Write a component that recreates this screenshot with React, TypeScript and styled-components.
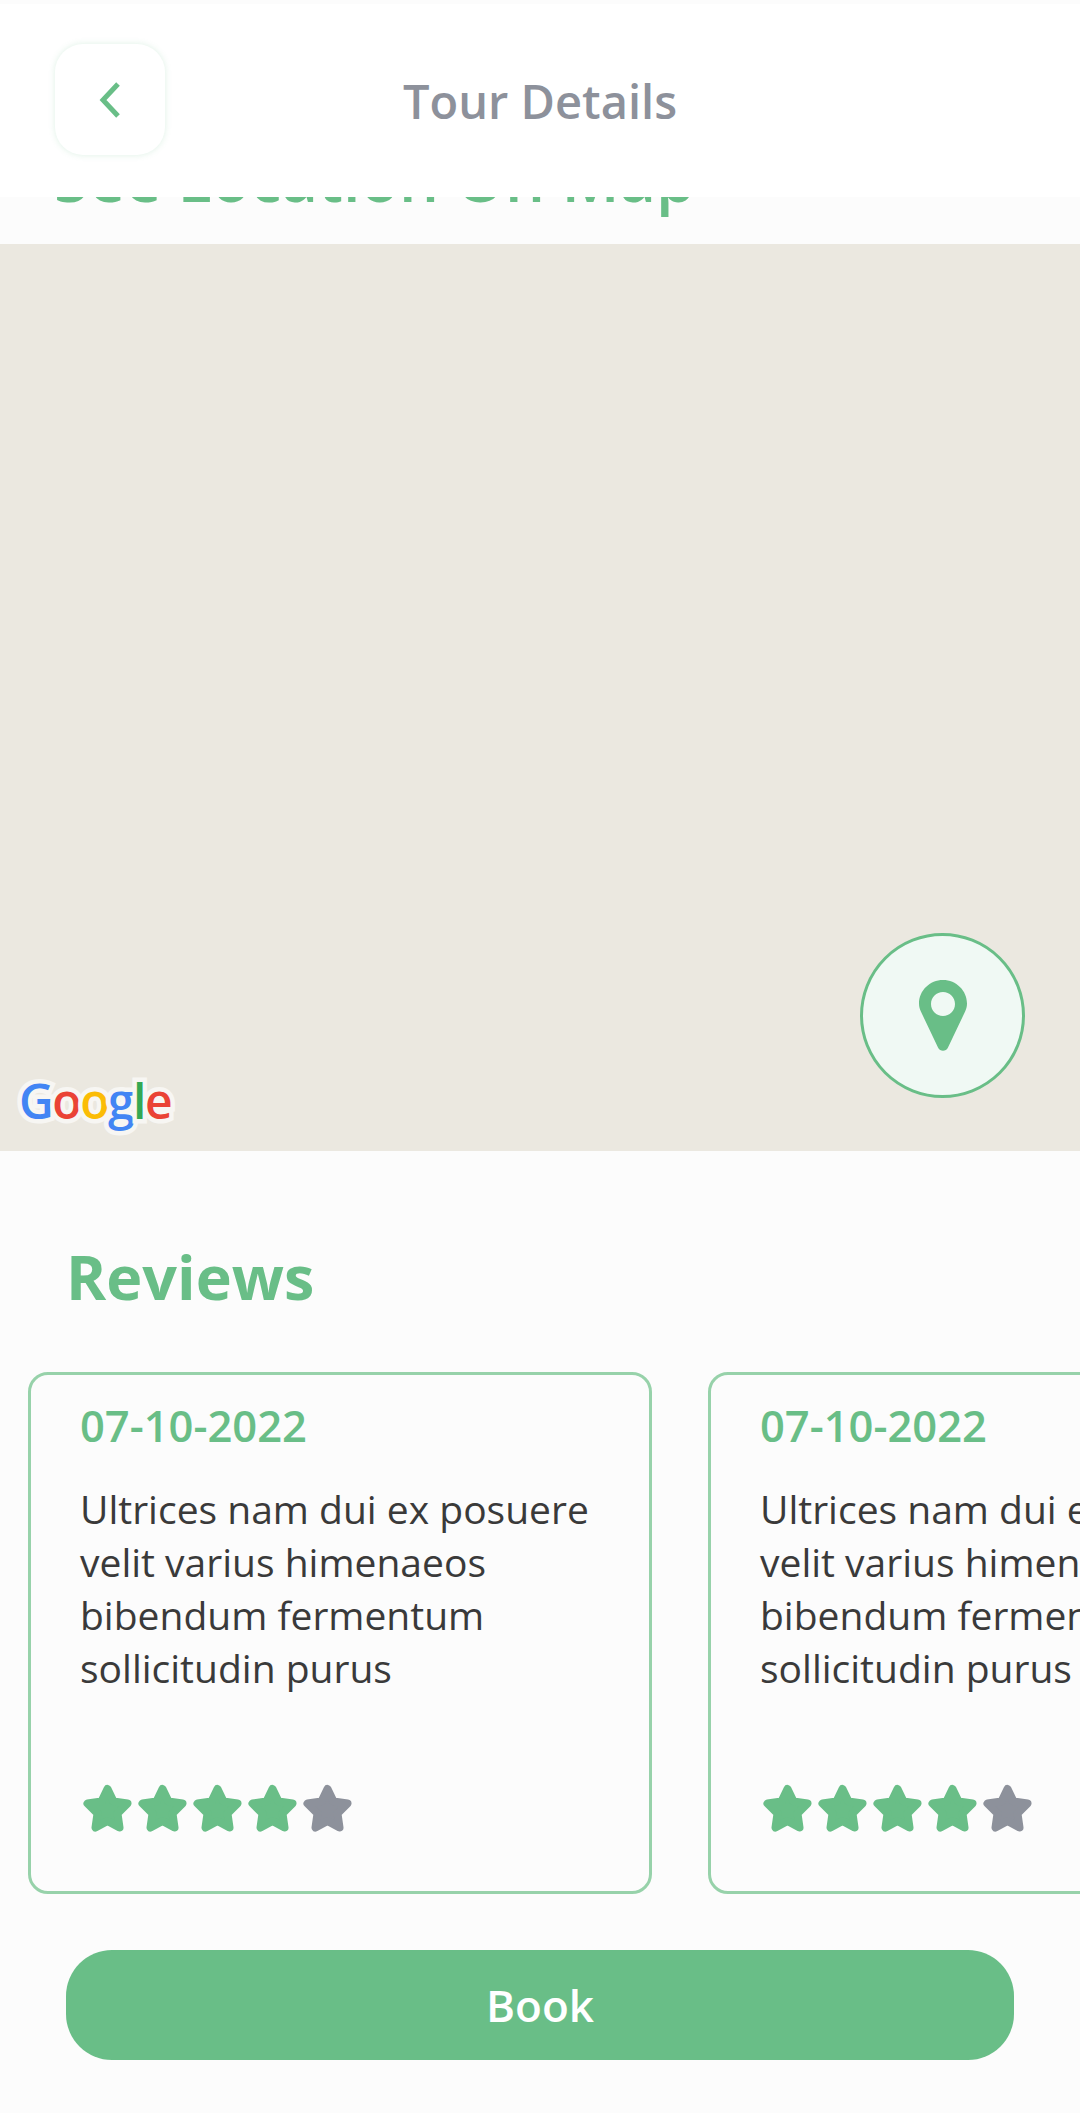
import React from 'react';
import styled, { createGlobalStyle } from 'styled-components';

const GREEN = '#69be87';
const GREY = '#8d919b';

const GlobalStyle = createGlobalStyle`
  html, body {
    margin: 0;
    padding: 0;
    background: #fcfcfc;
    font-family: 'Open Sans', sans-serif;
  }
  * {
    box-sizing: border-box;
  }
`;

const Page = styled.div`
  width: 1080px;
  height: 2113px;
  overflow: hidden;
  background: #fcfcfc;
  padding-top: 4px;
`;

const Header = styled.header`
  position: relative;
  z-index: 2;
  height: 193px;
  background: #ffffff;
  display: flex;
  align-items: center;
  justify-content: center;
`;

const BackButton = styled.button`
  position: absolute;
  left: 55px;
  top: 40px;
  width: 110px;
  height: 111px;
  border: none;
  border-radius: 28px;
  background: #ffffff;
  box-shadow: 0 0 6px rgba(105, 190, 135, 0.22);
  display: flex;
  align-items: center;
  justify-content: center;
  padding: 0;
`;

const HeaderTitle = styled.h1`
  margin: 0;
  font-size: 47px;
  line-height: 60px;
  font-weight: 600;
  color: ${GREY};
`;

const MapHeading = styled.div`
  height: 47px;
  overflow: hidden;
  padding-left: 54px;
`;

const MapHeadingText = styled.h2`
  margin: -62px 0 0;
  font-size: 63px;
  line-height: 86px;
  font-weight: 600;
  color: ${GREEN};
  white-space: nowrap;
`;

const MapArea = styled.div`
  position: relative;
  height: 907px;
  background: #ebe8e0;
`;

const PinCircle = styled.div`
  position: absolute;
  left: 860px;
  top: 689px;
  width: 165px;
  height: 165px;
  border-radius: 50%;
  border: 3px solid ${GREEN};
  background: #f0f9f4;
  display: flex;
  align-items: center;
  justify-content: center;
`;

const GoogleMark = styled.div`
  position: absolute;
  left: 19px;
  top: 823px;
  font-family: 'Open Sans', sans-serif;
  font-size: 48px;
  line-height: 68px;
  letter-spacing: -1.5px;
  font-weight: 600;
  white-space: nowrap;
  -webkit-text-stroke: 9px #f7f6f3;
  paint-order: stroke fill;
`;

const GoogleLetter = styled.span<{ $color: string }>`
  color: ${p => p.$color};
`;

const ReviewsTitle = styled.h2`
  margin: 84px 0 0 66px;
  font-size: 61px;
  line-height: 84px;
  font-weight: 700;
  color: ${GREEN};
`;

const CardRow = styled.div`
  display: flex;
  gap: 56px;
  margin-top: 53px;
  padding-left: 28px;
  overflow: hidden;
`;

const ReviewCard = styled.article`
  flex: 0 0 624px;
  height: 522px;
  border: 3px solid #97d2aa;
  border-radius: 20px;
  padding: 23px 49px 0;
`;

const ReviewDate = styled.div`
  font-size: 43.5px;
  line-height: 56px;
  font-weight: 600;
  color: ${GREEN};
`;

const ReviewBody = styled.p`
  margin: 28px 0 0;
  height: 212px;
  font-size: 39px;
  line-height: 53px;
  color: #3a3a3a;
`;

const StarRow = styled.div`
  display: flex;
  gap: 6px;
  margin: 90px 0 0 3px;
`;

const BookButton = styled.button`
  display: block;
  width: 948px;
  height: 110px;
  margin: 56px 0 0 66px;
  border: none;
  border-radius: 46px;
  background: ${GREEN};
  color: #ffffff;
  font-family: 'Open Sans', sans-serif;
  font-size: 44px;
  font-weight: 600;
`;

const Star = ({ on }: { on: boolean }) => (
  <svg width="49" height="49" viewBox="0 0 49 49">
    <polygon
      points="24.5,5 30.5,17.5 44.5,19.5 34.5,29.5 36.5,43.5 24.5,37 12.5,43.5 14.5,29.5 4.5,19.5 18.5,17.5"
      fill={on ? GREEN : GREY}
      stroke={on ? GREEN : GREY}
      strokeWidth="8"
      strokeLinejoin="round"
    />
  </svg>
);

const Pin = () => (
  <svg width="48" height="72" viewBox="0 0 48 72">
    <path
      fillRule="evenodd"
      fill={GREEN}
      d="M24 0C10.8 0 0 10.6 0 23.6c0 3 .7 5.6 2 8.2l17 35.6c2 4.4 8 4.4 10 0l17-35.6c1.3-2.6 2-5.2 2-8.2C48 10.6 37.2 0 24 0zm0 12c6.6 0 12 5.4 12 12s-5.400 12-12 12-12-5.400-12-12 5.400-12 12-12z"
    />
  </svg>
);

const reviews = [1, 2];
const googleLetters: [string, string][] = [
  ['G', '#4285f4'],
  ['o', '#ea4335'],
  ['o', '#fbbc05'],
  ['g', '#4285f4'],
  ['l', '#34a853'],
  ['e', '#ea4335'],
];

export default function App() {
  return (
    <Page>
      <GlobalStyle />
      <Header>
        <BackButton aria-label="Back">
          <svg width="24" height="38" viewBox="0 0 24 38">
            <path d="M20 3 L5 19 L20 35" fill="none" stroke={GREEN} strokeWidth="5" />
          </svg>
        </BackButton>
        <HeaderTitle>Tour Details</HeaderTitle>
      </Header>

      <MapHeading>
        <MapHeadingText>See Location On Map</MapHeadingText>
      </MapHeading>

      <MapArea>
        <GoogleMark>
          {googleLetters.map(([letter, color], i) => (
            <GoogleLetter key={i} $color={color}>{letter}</GoogleLetter>
          ))}
        </GoogleMark>
        <PinCircle>
          <Pin />
        </PinCircle>
      </MapArea>

      <ReviewsTitle>Reviews</ReviewsTitle>

      <CardRow>
        {reviews.map(r => (
          <ReviewCard key={r}>
            <ReviewDate>07-10-2022</ReviewDate>
            <ReviewBody>
              Ultrices nam dui ex posuere velit varius himenaeos bibendum fermentum sollicitudin purus
            </ReviewBody>
            <StarRow>
              {[0, 1, 2, 3, 4].map(i => (
                <Star key={i} on={i < 4} />
              ))}
            </StarRow>
          </ReviewCard>
        ))}
      </CardRow>

      <BookButton>Book</BookButton>
    </Page>
  );
}
